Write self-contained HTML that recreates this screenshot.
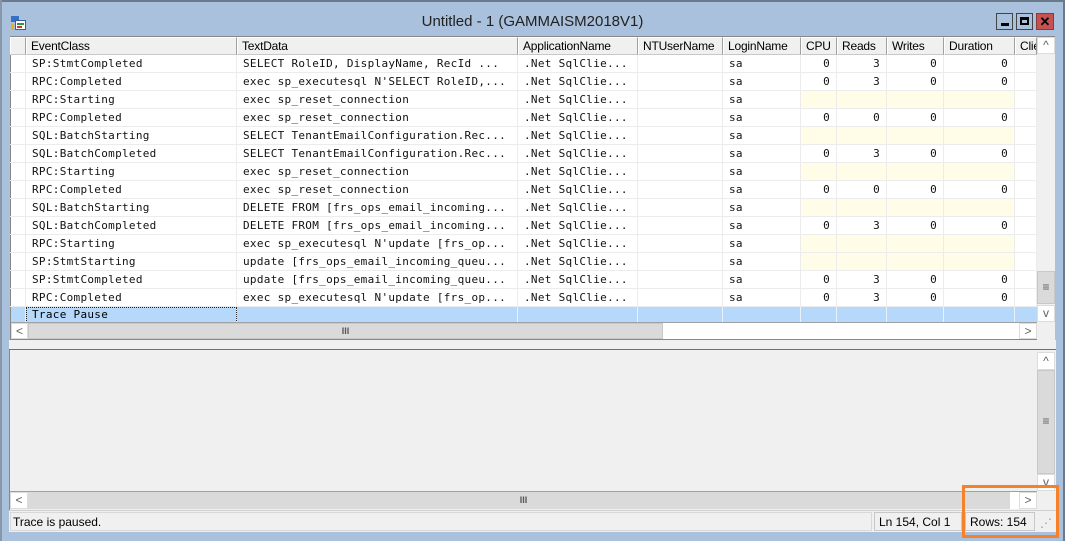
<!DOCTYPE html>
<html><head><style>
*{margin:0;padding:0;box-sizing:border-box}
body{width:1065px;height:541px;overflow:hidden;background:#a9c1dc;font-family:"Liberation Sans",sans-serif;position:relative}
.a{position:absolute}
.mono{font-family:"DejaVu Sans Mono","Liberation Mono",monospace;font-size:11px;letter-spacing:0.3px}
.hd{position:absolute;top:37px;height:18px;background:#f0f0f0;border-right:1px solid #a0a0a0;border-bottom:1px solid #c8c8c8;border-left:1px solid #fff;border-top:1px solid #fff;font-size:12px;line-height:16px;padding-left:4px;color:#000;letter-spacing:-0.2px;overflow:hidden;white-space:nowrap}
.c{position:absolute;height:18px;border-right:1px solid #ececec;border-bottom:1px solid #ececec;line-height:17px;white-space:nowrap;overflow:hidden;padding-left:6px;color:#111}
.r{text-align:right;padding-right:6px;padding-left:0}
.y{background:#fffde8}
.sb{position:absolute;background:#fff;border:1px solid #dcdcdc;color:#606060;font-size:12px;text-align:center}
</style></head><body>
<div class="a" style="left:0;top:0;width:1065px;height:2px;background:#6b7a8a"></div>
<div class="a" style="left:0;top:0;width:2px;height:541px;background:#8796a8"></div>
<div class="a" style="left:1063px;top:0;width:2px;height:541px;background:#6b7a8a"></div>
<!-- icon -->
<div class="a" style="left:11px;top:16px;width:15px;height:14px">
<div class="a" style="left:0;top:0;width:8px;height:6px;background:#3a6fc8"></div>
<div class="a" style="left:4px;top:4px;width:11px;height:10px;background:#fff;border:1px solid #3060a0"></div>
<div class="a" style="left:6px;top:7px;width:7px;height:2px;background:#2a9a3a"></div>
<div class="a" style="left:6px;top:10px;width:5px;height:2px;background:#d03030"></div>
<div class="a" style="left:0;top:8px;width:3px;height:6px;background:#e8b020"></div>
</div>
<div class="a" style="left:0;top:13px;width:1065px;text-align:center;font-size:15px;color:#222">Untitled - 1 (GAMMAISM2018V1)</div>
<div class="a" style="left:996px;top:13px;width:17px;height:17px;border:1px solid #444;background:#a9c1dc"><div class="a" style="left:4px;top:9px;width:8px;height:3px;background:#000"></div></div>
<div class="a" style="left:1016px;top:13px;width:17px;height:17px;border:1px solid #444;background:#a9c1dc"><div class="a" style="left:3px;top:3px;width:9px;height:8px;border:2px solid #000;border-top-width:3px"></div></div>
<div class="a" style="left:1036px;top:13px;width:18px;height:17px;background:#c75050;border:1px solid #8a3a3a;color:#000;font-weight:bold;font-size:13px;text-align:center;line-height:15px">✕</div>

<!-- upper grid -->
<div class="a" style="left:10px;top:36px;width:1045px;height:304px;background:#fff;border:1px solid #888"></div>
<div class="hd" style="left:10px;width:16px"></div>
<div class="hd" style="left:26px;width:211px">EventClass</div>
<div class="hd" style="left:237px;width:281px">TextData</div>
<div class="hd" style="left:518px;width:120px">ApplicationName</div>
<div class="hd" style="left:638px;width:85px">NTUserName</div>
<div class="hd" style="left:723px;width:78px">LoginName</div>
<div class="hd" style="left:801px;width:36px">CPU</div>
<div class="hd" style="left:837px;width:50px">Reads</div>
<div class="hd" style="left:887px;width:57px">Writes</div>
<div class="hd" style="left:944px;width:71px">Duration</div>
<div class="hd" style="left:1015px;width:22px">Clie</div>
<div id="rows" class="mono"></div>
<script>
var d=[["SP:StmtCompleted","SELECT RoleID, DisplayName, RecId  ...",1,3],["RPC:Completed","exec sp_executesql N'SELECT RoleID,...",1,3],["RPC:Starting","exec sp_reset_connection",0],["RPC:Completed","exec sp_reset_connection",1,0],["SQL:BatchStarting","SELECT TenantEmailConfiguration.Rec...",0],["SQL:BatchCompleted","SELECT TenantEmailConfiguration.Rec...",1,3],["RPC:Starting","exec sp_reset_connection",0],["RPC:Completed","exec sp_reset_connection",1,0],["SQL:BatchStarting","DELETE FROM [frs_ops_email_incoming...",0],["SQL:BatchCompleted","DELETE FROM [frs_ops_email_incoming...",1,3],["RPC:Starting","exec sp_executesql N'update [frs_op...",0],["SP:StmtStarting","update [frs_ops_email_incoming_queu...",0],["SP:StmtCompleted","update [frs_ops_email_incoming_queu...",1,3],["RPC:Completed","exec sp_executesql N'update [frs_op...",1,3]];
var cols=[[10,16],[26,211],[237,281],[518,120],[638,85],[723,78],[801,36],[837,50],[887,57],[944,71],[1015,22]];
var h="";
function cell(x,w,t,top,cls){return '<div class="c '+cls+'" style="left:'+x+'px;width:'+w+'px;top:'+top+'px">'+t+'</div>';}
d.forEach(function(r,i){var t=55+i*18;
var v=[ "",r[0],r[1],".Net SqlClie...","","sa"];
for(var k=0;k<6;k++)h+=cell(cols[k][0],cols[k][1],v[k],t,"");
var nums=r[2]?["0",r[3],"0","0"]:["","","",""];
for(var k=6;k<10;k++)h+=cell(cols[k][0],cols[k][1],nums[k-6],t,r[2]?"r":"r y");
h+=cell(cols[10][0],cols[10][1],"",t,"");});
var t=55+14*18;
h+='<div class="a" style="left:11px;top:'+t+'px;width:1026px;height:16px;background:#b6d8fb"></div>';
for(var k=1;k<11;k++)h+='<div class="a" style="left:'+(cols[k][0]-1)+'px;top:'+t+'px;width:1px;height:16px;background:#e8f2fd"></div>';
h+='<div class="a" style="left:26px;top:'+t+'px;width:211px;height:16px;border:1px dotted #222;padding-left:5px;line-height:14px">Trace Pause</div>';
document.getElementById("rows").innerHTML=h;
</script>
<!-- upper vscroll -->
<div class="a" style="left:1037px;top:37px;width:18px;height:286px;background:#f0f0f0"></div>
<div class="sb" style="left:1037px;top:37px;width:18px;height:17px;line-height:15px">^</div>
<div class="a" style="left:1037px;top:271px;width:18px;height:33px;background:#dadada;border:1px solid #c8c8c8;color:#606060;font-size:12px;text-align:center;line-height:30px">≡</div>
<div class="sb" style="left:1037px;top:305px;width:18px;height:17px;line-height:15px">v</div>
<!-- upper hscroll -->
<div class="a" style="left:11px;top:322px;width:1026px;height:17px;background:#fff;border-top:1px solid #a0a0a0"></div>
<div class="sb" style="left:11px;top:323px;width:17px;height:16px;line-height:14px">&lt;</div>
<div class="a" style="left:28px;top:323px;width:635px;height:16px;background:#dadada;border:1px solid #c8c8c8;color:#555;font-size:9px;font-weight:bold;text-align:center;line-height:14px">III</div>
<div class="sb" style="left:1019px;top:323px;width:18px;height:16px;line-height:14px">&gt;</div>
<div class="a" style="left:1037px;top:322px;width:18px;height:18px;background:#f0f0f0"></div>
<!-- splitter -->
<div class="a" style="left:9px;top:340px;width:1047px;height:10px;background:#f0f0f0;border-bottom:1px solid #707070"></div>
<!-- lower pane -->
<div class="a" style="left:9px;top:350px;width:1047px;height:161px;background:#f0f0f0;border-left:1px solid #888"></div>
<div class="sb" style="left:1037px;top:352px;width:18px;height:18px;line-height:16px">^</div>
<div class="a" style="left:1037px;top:370px;width:18px;height:104px;background:#dadada;border:1px solid #c8c8c8;color:#606060;font-size:12px;text-align:center;line-height:100px">≡</div>
<div class="sb" style="left:1037px;top:474px;width:18px;height:17px;line-height:14px">v</div>
<div class="a" style="left:10px;top:491px;width:1027px;height:18px;background:#dadada;border-top:1px solid #a0a0a0;color:#555;font-size:9px;font-weight:bold;text-align:center;line-height:16px">III</div>
<div class="sb" style="left:10px;top:492px;width:18px;height:17px;line-height:15px">&lt;</div>
<div class="a" style="left:1010px;top:492px;width:10px;height:17px;background:#fff"></div>
<div class="sb" style="left:1019px;top:492px;width:18px;height:17px;line-height:15px">&gt;</div>
<!-- status bar -->
<div class="a" style="left:9px;top:510px;width:1047px;height:22px;background:#f0f0f0;border-top:1px solid #d0d0d0"></div>
<div class="a" style="left:10px;top:512px;width:862px;height:19px;border:1px solid #d8d8d8;font-size:12px;line-height:18px;padding-left:2px">Trace is paused.</div>
<div class="a" style="left:874px;top:512px;width:88px;height:19px;border:1px solid #c8c8c8;font-size:12px;line-height:18px;padding-left:4px">Ln 154, Col 1</div>
<div class="a" style="left:965px;top:512px;width:70px;height:19px;border:1px solid #c8c8c8;font-size:12px;line-height:18px;padding-left:4px">Rows: 154</div>
<div class="a" style="left:1040px;top:516px;color:#999;font-size:12px">⋰</div>
<div class="a" style="left:962px;top:485px;width:97px;height:53px;border:3px solid #f5822a"></div>
</body></html>
